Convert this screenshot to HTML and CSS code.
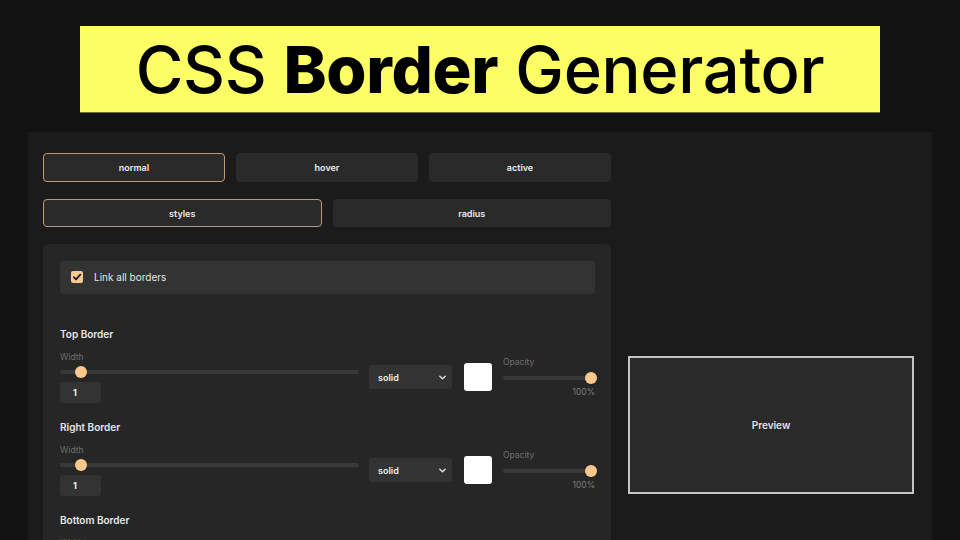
FILE: index.html
```html
<!DOCTYPE html>
<html lang="en">
<head>
<meta charset="utf-8">
<title>CSS Border Generator</title>
<link rel="stylesheet" href="styles.css">
</head>
<body>
<header class="banner"><h1>CSS <b>Border</b> Generator</h1></header>
<main class="panel">
  <section class="controls">
    <div class="tabs three">
      <button class="tab on">normal</button>
      <button class="tab">hover</button>
      <button class="tab">active</button>
    </div>
    <div class="tabs two">
      <button class="tab on">styles</button>
      <button class="tab">radius</button>
    </div>
    <div class="card">
      <label class="link">
        <span class="check"><svg viewBox="0 0 12 12" width="12" height="12"><path d="M2.8 6.2 L5 8.4 L9.3 3.6" fill="none" stroke="#1a1a1a" stroke-width="1.8" stroke-linecap="round" stroke-linejoin="round"/></svg></span>
        Link all borders
      </label>

      <div class="side">
        <h3>Top Border</h3>
        <div class="row">
          <div class="wcol">
            <div class="lbl">Width</div>
            <div class="slider"><span class="thumb" style="left:6%"></span></div>
            <div class="num">1</div>
          </div>
          <div class="select">solid<svg viewBox="0 0 10 10" width="9" height="9"><path d="M2 3.5 L5 6.5 L8 3.5" fill="none" stroke="#ddd" stroke-width="1.6" stroke-linecap="round" stroke-linejoin="round"/></svg></div>
          <div class="swatch"></div>
          <div class="ocol">
            <div class="lbl">Opacity</div>
            <div class="slider o"><span class="thumb" style="left:100%"></span></div>
            <div class="pct">100%</div>
          </div>
        </div>
      </div>

      <div class="side">
        <h3>Right Border</h3>
        <div class="row">
          <div class="wcol">
            <div class="lbl">Width</div>
            <div class="slider"><span class="thumb" style="left:6%"></span></div>
            <div class="num">1</div>
          </div>
          <div class="select">solid<svg viewBox="0 0 10 10" width="9" height="9"><path d="M2 3.5 L5 6.5 L8 3.5" fill="none" stroke="#ddd" stroke-width="1.6" stroke-linecap="round" stroke-linejoin="round"/></svg></div>
          <div class="swatch"></div>
          <div class="ocol">
            <div class="lbl">Opacity</div>
            <div class="slider o"><span class="thumb" style="left:100%"></span></div>
            <div class="pct">100%</div>
          </div>
        </div>
      </div>

      <div class="side">
        <h3>Bottom Border</h3>
        <div class="row">
          <div class="wcol">
            <div class="lbl">Width</div>
            <div class="slider"><span class="thumb" style="left:6%"></span></div>
            <div class="num">1</div>
          </div>
        </div>
      </div>
    </div>
  </section>
  <aside class="view">
    <div class="preview">Preview</div>
  </aside>
</main>
</body>
</html>
```

FILE: styles.css
```css
* { box-sizing: border-box; }
html, body { margin: 0; padding: 0; }
body {
  background: #121212;
  font-family: "Inter", "Liberation Sans", sans-serif;
  color: #e8e8e8;
  width: 960px;
  height: 540px;
  overflow: hidden;
}
.banner {
  margin: 26px 80px 0;
  height: 87px;
  background: #fdfd66;
  border-bottom: 1px solid #6b6b2a;
  display: flex;
  align-items: center;
  justify-content: center;
}
.banner h1 {
  margin: 0;
  font-family: "Inter", "Liberation Sans", sans-serif;
  font-weight: 500;
  font-size: 65px;
  letter-spacing: -0.3px;
  color: #000;
  line-height: 1;
}
.banner h1 b { font-weight: 800; }

.panel {
  margin: 19px 28px 0;
  background: #1b1b1b;
  padding: 21px 18px 0 15px;
  display: flex;
  gap: 17px;
  height: 420px;
  overflow: hidden;
}
.controls { width: 568px; flex: none; }
.tabs { display: grid; gap: 11px; }
.tabs.three { grid-template-columns: 1fr 1fr 1fr; }
.tabs.two { grid-template-columns: 1fr 1fr; margin-top: 17px; }
.tab {
  height: 29px;
  background: #2a2a2a;
  border: 1px solid #2a2a2a;
  border-radius: 4px;
  color: #ececec;
  font-family: inherit;
  font-size: 9px;
  font-weight: 600;
  padding: 0;
}
.tabs.two .tab { height: 28px; }
.tab.on { border-color: #b89a76; }

.card {
  margin-top: 17px;
  background: #262626;
  border-radius: 6px;
  padding: 17px 16px 17px 17px;
  height: 320px;
}
.link {
  height: 33px;
  background: #333333;
  border-radius: 4px;
  display: flex;
  align-items: center;
  padding-left: 11px;
  padding-bottom: 2px;
  font-size: 10px;
  color: #e6e6e6;
  gap: 11px;
}
.check {
  width: 12px; height: 12px;
  background: #f7c98f;
  border-radius: 2px;
  display: flex;
}
.side h3 {
  margin: 0 0 10px;
  font-size: 10px;
  line-height: 14px;
  font-weight: 600;
  color: #e6e6e6;
}
.side { margin-top: 17px; }
.link + .side { margin-top: 33px; }
.row { display: flex; align-items: center; }
.wcol { flex: 1; display: flex; flex-direction: column; }
.lbl { font-size: 8.5px; line-height: 12px; color: #6f6f6f; }
.slider {
  position: relative;
  height: 4px;
  background: #383838;
  border-radius: 2px;
  margin: 7px 0 8px;
}
.wcol .slider { margin: 7px 0 8px; }
.thumb {
  position: absolute;
  top: 50%;
  width: 12px; height: 12px;
  margin: -6px 0 0 -6px;
  border-radius: 50%;
  background: #fcc88c;
}
.wcol .thumb { margin-left: 0; transform: translateX(-3px); }
.num {
  width: 41px; height: 21px;
  background: #333;
  border-radius: 3px;
  font-size: 9px;
  font-weight: 700;
  color: #eee;
  display: flex;
  align-items: center;
  padding-left: 13px;
}
.select {
  margin-left: 10px;
  width: 83px; height: 24px;
  background: #333;
  border-radius: 3px;
  display: flex;
  align-items: center;
  justify-content: space-between;
  padding: 0 5px 0 9px;
  font-size: 9px;
  font-weight: 600;
  color: #eee;
}
.swatch {
  margin-left: 12px;
  width: 28px; height: 28px;
  background: #fff;
  border-radius: 3px;
}
.ocol {
  margin-left: 11px;
  width: 92px;
  display: flex;
  flex-direction: column;
}
.slider.o { margin: 8px 2px 7px 0; }
.slider.o .thumb { margin-left: -8px; }
.pct { text-align: right; font-size: 8.5px; line-height: 11px; color: #7a7a7a; }

.view { flex: 1; padding-top: 203px; }
.preview {
  width: 286px; height: 138px;
  border: 2px solid #c4c4c4;
  background: #2a2a2a;
  display: flex;
  align-items: center;
  justify-content: center;
  font-size: 10px;
  font-weight: 600;
  color: #e2e2e2;
}
```
